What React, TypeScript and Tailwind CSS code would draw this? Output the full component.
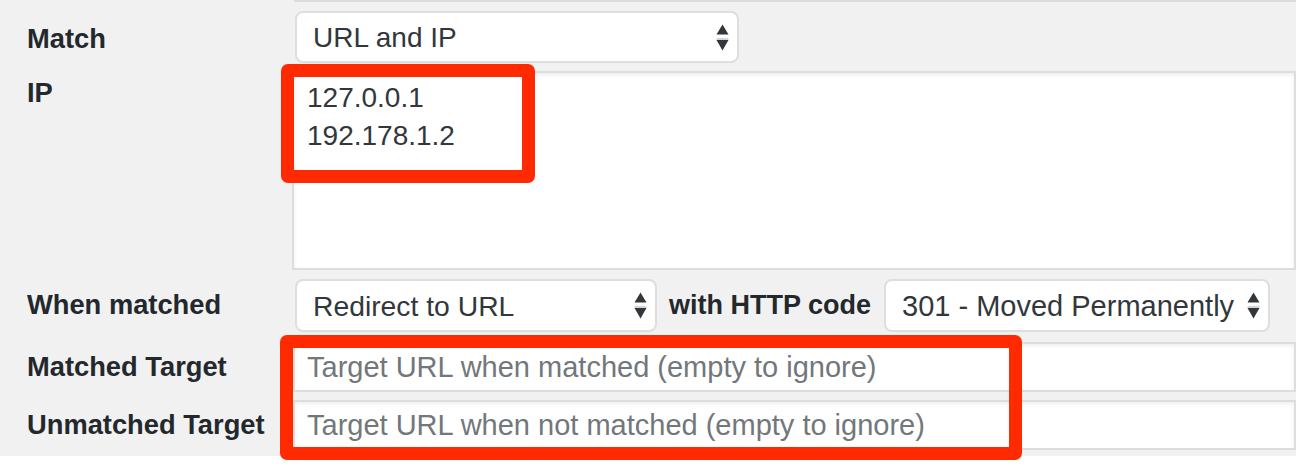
import React from "react";

const font = { fontFamily: '"Liberation Sans", Arial, Helvetica, sans-serif' };

function Arrows() {
  return (
    <svg width="13" height="27" viewBox="0 0 13 27" className="shrink-0">
      <path d="M0.5 10.5 L6.5 0.5 L12.5 10.5 Z" fill="#32373c" />
      <path d="M0.5 15 L12.5 15" stroke="#a7aaad" strokeWidth="1" />
      <path d="M0.5 16 L12.5 16 L6.5 26.5 Z" fill="#32373c" />
    </svg>
  );
}

function FakeSelect({ value, className }: { value: string; className: string }) {
  return (
    <div
      className={
        "flex items-center justify-between rounded-[8px] border-2 border-[#dedede] bg-white pl-4 pr-[8px] leading-none text-[#32373c] " +
        className
      }
    >
      <span className="pt-[1px]">{value}</span>
      <Arrows />
    </div>
  );
}

function Label({ children, className }: { children: React.ReactNode; className?: string }) {
  return (
    <div className={"w-[292px] shrink-0 pl-[27px] text-[27.3px] font-bold text-[#23282d] " + (className ?? "")}>
      {children}
    </div>
  );
}

function TargetInput({ placeholder }: { placeholder: string }) {
  return (
    <input
      readOnly
      placeholder={placeholder}
      className="ml-px h-[50px] w-[1020px] border-2 border-[#dddddd] bg-white pl-3 text-[29px] text-[#32373c] shadow-[inset_0_2px_4px_rgba(0,0,0,0.07)] outline-none placeholder:text-[#72777c]"
    />
  );
}

export default function App() {
  return (
    <div className="relative h-[469px] w-[1296px] overflow-hidden bg-white" style={font}>
      <div className="h-[456px] bg-[#f1f1f1]">
        {/* bottom edge of the field above */}
        <div className="ml-[294px] h-[2px] bg-[#dcdcdc]" />

        <div className="mt-[9px] flex items-center">
          <Label className="pt-[4px]">Match</Label>
          <FakeSelect value="URL and IP" className="ml-[3px] h-[52px] w-[444px] text-[28px]" />
        </div>

        <div className="mt-[8px] flex items-start">
          <Label className="pt-[3px] leading-[38px]">IP</Label>
          <div className="h-[199px] w-[1020px] border-2 border-[#dddddd] bg-white pl-[13px] pt-[6px] text-[28px] leading-[38px] text-[#32373c] shadow-[inset_0_2px_4px_rgba(0,0,0,0.07)]">
            <div>127.0.0.1</div>
            <div>192.178.1.2</div>
          </div>
        </div>

        <div className="mt-[9px] flex items-center">
          <Label>When matched</Label>
          <FakeSelect value="Redirect to URL" className="ml-[3px] h-[53px] w-[362px] text-[28.3px]" />
          <span className="ml-[12px] text-[27px] font-bold text-[#23282d]">with HTTP code</span>
          <FakeSelect value="301 - Moved Permanently" className="ml-[13px] h-[53px] w-[386px] text-[29px]" />
        </div>

        <div className="mt-[10px] flex items-center">
          <Label>Matched Target</Label>
          <TargetInput placeholder="Target URL when matched (empty to ignore)" />
        </div>

        <div className="mt-[8px] flex items-center">
          <Label>Unmatched Target</Label>
          <TargetInput placeholder="Target URL when not matched (empty to ignore)" />
        </div>
      </div>

      {/* annotation highlights */}
      <div className="absolute left-[281px] top-[64px] h-[119px] w-[254px] rounded-[7px] border-[13px] border-[#ff2a00]" />
      <div className="absolute left-[280px] top-[335px] h-[125px] w-[742px] rounded-[7px] border-[13px] border-[#ff2a00]" />
    </div>
  );
}
